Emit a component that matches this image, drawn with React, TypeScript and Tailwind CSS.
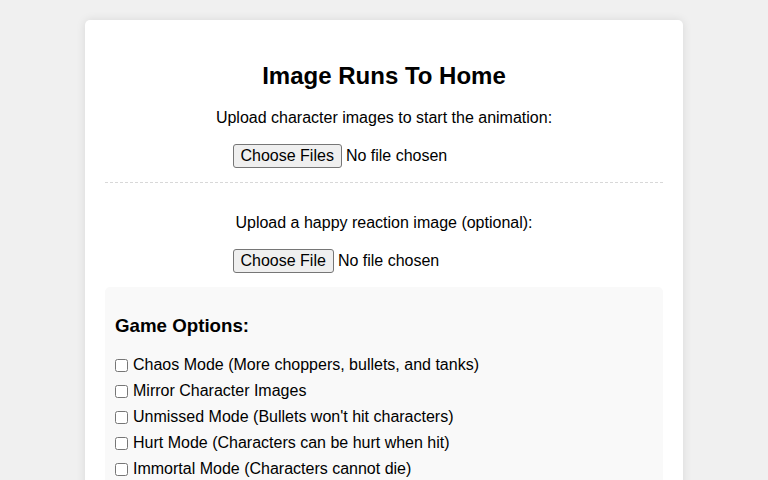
const options = [
  "Chaos Mode (More choppers, bullets, and tanks)",
  "Mirror Character Images",
  "Unmissed Mode (Bullets won't hit characters)",
  "Hurt Mode (Characters can be hurt when hit)",
  "Immortal Mode (Characters cannot die)",
];

const fileInput =
  "text-[16px] leading-[20px] file:mr-[4px] file:rounded-[3px] file:border file:border-solid file:border-[#767676] file:bg-[#efefef] file:px-[7px] file:py-[1px] file:leading-[20px] file:text-black";

export default function App() {
  return (
    <div className="min-h-screen bg-[#f0f0f0] pt-[20px] font-['Liberation_Sans',Arial,sans-serif] text-[16px] leading-[normal] text-black">
      <div className="mx-auto w-[598px] rounded-[5px] bg-white p-[20px] shadow-[0_0_10px_rgba(0,0,0,0.1)]">
        <div className="border-b border-dashed border-[#d8d8d8] pb-[14px] text-center">
          <h1 className="mt-[22px] mb-[19px] text-[24px] font-bold leading-[28px]">
            Image Runs To Home
          </h1>
          <p className="mb-[17px]">Upload character images to start the animation:</p>
          <input type="file" multiple accept="image/*" className={fileInput} />
        </div>

        <div className="pt-[31px] text-center">
          <p className="mb-[17px]">Upload a happy reaction image (optional):</p>
          <input type="file" accept="image/*" className={fileInput} />
        </div>

        <div className="mt-[14px] rounded-[5px] bg-[#f9f9f9] p-[10px]">
          <h3 className="mt-[18px] mb-[19px] text-[18.72px] font-bold leading-[22px]">
            Game Options:
          </h3>
          {options.map((o) => (
            <label key={o} className="mb-[8px] flex h-[18px] items-center">
              <input type="checkbox" className="m-0 mr-[5px] h-[13px] w-[13px]" />
              <span>{o}</span>
            </label>
          ))}
        </div>
      </div>
    </div>
  );
}
